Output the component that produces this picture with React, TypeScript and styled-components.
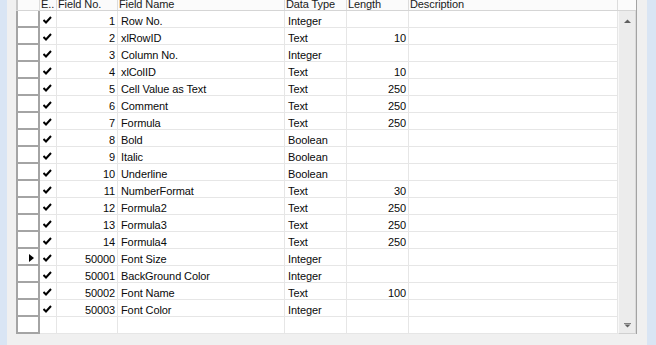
import React from 'react'
import styled, { createGlobalStyle } from 'styled-components'

interface Field {
  no: number
  name: string
  type: string
  length?: number
}

const fields: Field[] = [
  { no: 1, name: 'Row No.', type: 'Integer' },
  { no: 2, name: 'xlRowID', type: 'Text', length: 10 },
  { no: 3, name: 'Column No.', type: 'Integer' },
  { no: 4, name: 'xlColID', type: 'Text', length: 10 },
  { no: 5, name: 'Cell Value as Text', type: 'Text', length: 250 },
  { no: 6, name: 'Comment', type: 'Text', length: 250 },
  { no: 7, name: 'Formula', type: 'Text', length: 250 },
  { no: 8, name: 'Bold', type: 'Boolean' },
  { no: 9, name: 'Italic', type: 'Boolean' },
  { no: 10, name: 'Underline', type: 'Boolean' },
  { no: 11, name: 'NumberFormat', type: 'Text', length: 30 },
  { no: 12, name: 'Formula2', type: 'Text', length: 250 },
  { no: 13, name: 'Formula3', type: 'Text', length: 250 },
  { no: 14, name: 'Formula4', type: 'Text', length: 250 },
  { no: 50000, name: 'Font Size', type: 'Integer' },
  { no: 50001, name: 'BackGround Color', type: 'Integer' },
  { no: 50002, name: 'Font Name', type: 'Text', length: 100 },
  { no: 50003, name: 'Font Color', type: 'Integer' },
]

const CURRENT = 50000

// column widths incl. right divider
const cols = {
  sel: 24,
  enabled: 17,
  no: 61,
  name: 167,
  type: 62,
  length: 62,
  desc: 209,
  scroll: 18,
}

const Check = () => (
  <svg width="9" height="8" viewBox="0 0 9 8">
    <path d="M0.5 4 L3 6.5 L8 1" fill="none" stroke="#000" strokeWidth="2" />
  </svg>
)

const App: React.FC = () => {
  return (
    <Window>
      <GlobalStyle />
      <Edge />
      <Gutter />
      <Grid>
        <HeaderRow>
          <HeaderSel />
          <HeaderCell $w={cols.enabled}>E..</HeaderCell>
          <HeaderCell $w={cols.no}>Field No.</HeaderCell>
          <HeaderCell $w={cols.name}>Field Name</HeaderCell>
          <HeaderCell $w={cols.type}>Data Type</HeaderCell>
          <HeaderCell $w={cols.length}>Length</HeaderCell>
          <HeaderCell $w={cols.desc}>Description</HeaderCell>
          <HeaderCorner />
        </HeaderRow>
        <Body>
          <Rows>
            {fields.map(f => (
              <Row key={f.no}>
                <SelCell>{f.no === CURRENT && <Pointer />}</SelCell>
                <Cell $w={cols.enabled} $align="center">
                  <Check />
                </Cell>
                <Cell $w={cols.no} $align="right">{f.no}</Cell>
                <Cell $w={cols.name}>{f.name}</Cell>
                <Cell $w={cols.type}>{f.type}</Cell>
                <Cell $w={cols.length} $align="right">{f.length ?? ''}</Cell>
                <Cell $w={cols.desc} />
              </Row>
            ))}
            <Row>
              <SelCell />
              <Cell $w={cols.enabled} />
              <Cell $w={cols.no} />
              <Cell $w={cols.name} />
              <Cell $w={cols.type} />
              <Cell $w={cols.length} />
              <Cell $w={cols.desc} />
            </Row>
          </Rows>
          <ScrollBar>
            <Arrow viewBox="0 0 9 6" width="9" height="6">
              <path d="M1 5 L4.5 1.5 L8 5 Z" fill="#606060" />
            </Arrow>
            <Arrow viewBox="0 0 9 6" width="9" height="6">
              <path d="M1 0.5 H8" stroke="#808080" strokeWidth="1" />
              <path d="M1.5 1.5 L4.5 4.5 L7.5 1.5 Z" fill="#606060" />
            </Arrow>
          </ScrollBar>
        </Body>
      </Grid>
      <Gutter $w={10} />
      <Edge $w={9} />
    </Window>
  )
}

export default App

const GlobalStyle = createGlobalStyle`
  html, body {
    margin: 0;
    padding: 0;
    background: #f0f0f0;
  }
  body {
    font-family: "Liberation Sans", Arial, sans-serif;
    font-size: 11px;
    letter-spacing: -0.1px;
    color: #0a0a0a;
  }
`

const Window = styled.div`
  display: flex;
  width: 656px;
  height: 345px;
  overflow: hidden;
  background: #f0f0f0;
`

const Edge = styled.div<{ $w?: number }>`
  width: ${p => p.$w ?? 7}px;
  flex: none;
  background: #d9e5f4;
`

const Gutter = styled.div<{ $w?: number }>`
  width: ${p => p.$w ?? 9}px;
  flex: none;
`

const Grid = styled.div`
  width: 621px;
  height: 334px;
  flex: none;
  display: flex;
  flex-direction: column;
  border-right: 1px solid #a3a3a3;
  box-sizing: border-box;
  background: #fff;
`

const HeaderRow = styled.div`
  display: flex;
  height: 11px;
  flex: none;
  overflow: hidden;
  background: #fbfbfb;
  border-bottom: 1px solid #d5d5d5;
  box-sizing: border-box;
`

const HeaderSel = styled.div`
  width: ${cols.sel}px;
  flex: none;
  border-left: 2px solid #c8c8c8;
  border-right: 1px solid #dcdcdc;
  box-sizing: border-box;
`

const HeaderCell = styled.div<{ $w: number }>`
  width: ${p => p.$w}px;
  flex: none;
  box-sizing: border-box;
  border-right: 1px solid #dcdcdc;
  padding-left: 1px;
  line-height: 9px;
  white-space: nowrap;
  overflow: hidden;
  color: #1a1a1a;
`

const HeaderCorner = styled.div`
  flex: 1;
`

const Body = styled.div`
  display: flex;
  flex: 1;
`

const Rows = styled.div`
  display: flex;
  flex-direction: column;
`

const Row = styled.div`
  display: flex;
  height: 17px;
`

const SelCell = styled.div`
  width: ${cols.sel}px;
  flex: none;
  box-sizing: border-box;
  border: 2px solid #a4a4a4;
  border-top: none;
  background: #fff;
  display: flex;
  align-items: center;
  justify-content: flex-end;
  padding-right: 4px;
`

const Pointer = styled.span`
  width: 0;
  height: 0;
  border-top: 4px solid transparent;
  border-bottom: 4px solid transparent;
  border-left: 5px solid #000;
  margin-top: 2px;
`

const Cell = styled.div<{ $w: number; $align?: 'left' | 'right' | 'center' }>`
  width: ${p => p.$w}px;
  flex: none;
  box-sizing: border-box;
  border-right: 1px solid #e6e6e6;
  border-bottom: 1px solid #e6e6e6;
  padding: 2px 3px 0 3px;
  line-height: 16px;
  white-space: nowrap;
  overflow: visible;
  text-align: ${p => p.$align ?? 'left'};
  ${p => p.$align === 'right' && 'padding-right: 2px;'}
  ${p => p.$align === 'center' && 'padding: 1px 1px 0 0; display: flex; justify-content: center; align-items: center;'}
`

const ScrollBar = styled.div`
  width: ${cols.scroll}px;
  flex: none;
  box-sizing: border-box;
  background: #ececec;
  border-left: 1px solid #f8f8f8;
  border-right: 1px solid #dadada;
  border-bottom: 1px solid #d0d0d0;
  display: flex;
  flex-direction: column;
  justify-content: space-between;
  align-items: center;
  padding: 7px 0 4px;
`

const Arrow = styled.svg`
  display: block;
`
